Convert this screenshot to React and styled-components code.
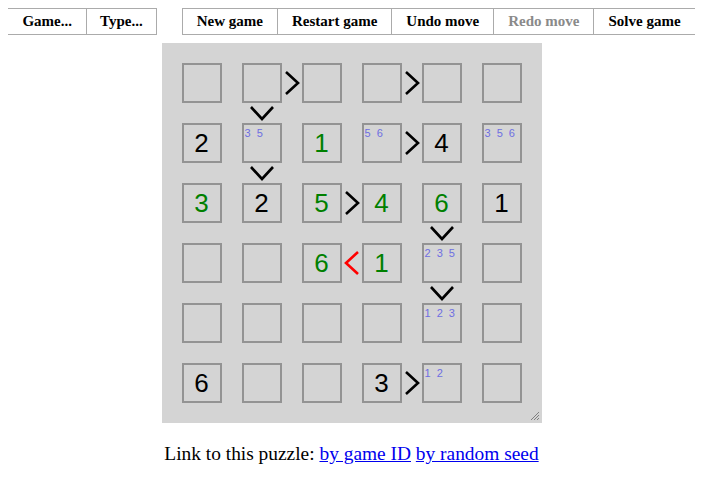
import React from "react";
import styled, { createGlobalStyle } from "styled-components";

const GlobalStyle = createGlobalStyle`
  body {
    margin: 8px;
    font-family: "Liberation Serif", "Times New Roman", serif;
    background: #ffffff;
    color: #000000;
  }
`;

const Page = styled.div`
  display: flex;
  flex-direction: column;
  align-items: center;
`;

const MenuBar = styled.div`
  display: flex;
  justify-content: center;
  gap: 25px;
  width: 100%;
`;

const MenuGroup = styled.ul`
  display: flex;
  list-style: none;
  margin: 0;
  padding: 0;
  border: 1px solid #ababab;
`;

const MenuItem = styled.li`
  height: 25px;
  line-height: 25px;
  padding: 0 ${(p) => p.$pad || 14}px;
  font-size: 15px;
  font-weight: bold;
  color: ${(p) => (p.$disabled ? "#8a8a8a" : "#000000")};
  white-space: nowrap;
  cursor: pointer;
  & + & {
    border-left: 1px solid #ababab;
  }
`;

const Board = styled.div`
  position: relative;
  margin-top: 8px;
  width: 340px;
  height: 340px;
  padding: 20px;
  background: #d4d4d4;
  display: grid;
  grid-template-columns: repeat(5, 40px 20px) 40px;
  grid-template-rows: repeat(5, 40px 20px) 40px;
`;

const Cell = styled.div`
  box-sizing: border-box;
  width: 40px;
  height: 40px;
  border: 2px solid #939393;
  position: relative;
  display: flex;
  align-items: center;
  justify-content: center;
  font-family: "Liberation Sans", Arial, sans-serif;
  font-size: 26px;
  color: ${(p) => (p.$user ? "#008000" : "#000000")};
`;

const Pencil = styled.div`
  position: absolute;
  top: 3px;
  left: 1px;
  display: flex;
  gap: 6px;
  font-family: "Liberation Sans", Arial, sans-serif;
  font-size: 11px;
  line-height: 11px;
  color: #6e6ee2;
`;

const Gap = styled.div`
  display: flex;
  align-items: center;
  justify-content: center;
`;

const Grip = styled.svg`
  position: absolute;
  right: 2px;
  bottom: 2px;
`;

const LinkLine = styled.p`
  margin: 20px 0 0;
  font-size: 19.4px;
  text-align: center;
  a {
    color: #0000ee;
  }
`;

// grid: number, "u" prefix = entered by user, "p" prefix = pencil marks
const grid = [
  ["", "", "", "", "", ""],
  ["2", "p35", "u1", "p56", "4", "p356"],
  ["u3", "2", "u5", "u4", "u6", "1"],
  ["", "", "u6", "u1", "p235", ""],
  ["", "", "", "", "p123", ""],
  ["6", "", "", "3", "p12", ""],
];

// horizontal signs between (r, c) and (r, c+1)
const hSigns = {
  "0,1": ">",
  "0,3": ">",
  "1,3": ">",
  "2,2": ">",
  "3,2": "<!",
  "5,3": ">",
};

// vertical signs between (r, c) and (r+1, c)
const vSigns = {
  "0,1": "v",
  "1,1": "v",
  "2,4": "v",
  "3,4": "v",
};

function Chevron({ dir, red }) {
  const color = red ? "#ff0000" : "#000000";
  if (dir === "v") {
    return (
      <svg width="40" height="20" viewBox="0 0 40 20">
        <polyline points="9,4 20,16 31,4" fill="none" stroke={color} strokeWidth="2.6" />
      </svg>
    );
  }
  const pts = dir === ">" ? "4,9 16,20 4,31" : "16,9 4,20 16,31";
  return (
    <svg width="20" height="40" viewBox="0 0 20 40">
      <polyline points={pts} fill="none" stroke={color} strokeWidth="2.6" />
    </svg>
  );
}

function CellView({ value }) {
  if (value.startsWith("p")) {
    return (
      <Cell>
        <Pencil>
          {value
            .slice(1)
            .split("")
            .map((d) => (
              <span key={d}>{d}</span>
            ))}
        </Pencil>
      </Cell>
    );
  }
  if (value.startsWith("u")) return <Cell $user>{value.slice(1)}</Cell>;
  return <Cell>{value}</Cell>;
}

function renderBoard() {
  const items = [];
  for (let gr = 0; gr < 11; gr++) {
    for (let gc = 0; gc < 11; gc++) {
      const r = Math.floor(gr / 2);
      const c = Math.floor(gc / 2);
      const key = `${gr}-${gc}`;
      if (gr % 2 === 0 && gc % 2 === 0) {
        items.push(<CellView key={key} value={grid[r][c]} />);
      } else if (gr % 2 === 0) {
        const s = hSigns[`${r},${c}`];
        items.push(
          <Gap key={key}>
            {s && <Chevron dir={s[0]} red={s.endsWith("!")} />}
          </Gap>
        );
      } else if (gc % 2 === 0) {
        const s = vSigns[`${r},${c}`];
        items.push(<Gap key={key}>{s && <Chevron dir="v" />}</Gap>);
      } else {
        items.push(<Gap key={key} />);
      }
    }
  }
  return items;
}

export default function App() {
  return (
    <>
      <GlobalStyle />
      <Page>
        <MenuBar>
          <MenuGroup>
            <MenuItem>Game...</MenuItem>
            <MenuItem $pad={13}>Type...</MenuItem>
          </MenuGroup>
          <MenuGroup>
            <MenuItem>New game</MenuItem>
            <MenuItem>Restart game</MenuItem>
            <MenuItem>Undo move</MenuItem>
            <MenuItem $disabled>Redo move</MenuItem>
            <MenuItem>Solve game</MenuItem>
          </MenuGroup>
        </MenuBar>
        <Board>
          {renderBoard()}
          <Grip width="10" height="10" viewBox="0 0 10 10">
            <line x1="9" y1="1" x2="1" y2="9" stroke="#808080" strokeWidth="1" />
            <line x1="9" y1="4" x2="4" y2="9" stroke="#808080" strokeWidth="1" />
            <line x1="9" y1="7" x2="7" y2="9" stroke="#808080" strokeWidth="1" />
          </Grip>
        </Board>
        <LinkLine>
          Link to this puzzle: <a href="#id">by game ID</a>{" "}
          <a href="#seed">by random seed</a>
        </LinkLine>
      </Page>
    </>
  );
}
